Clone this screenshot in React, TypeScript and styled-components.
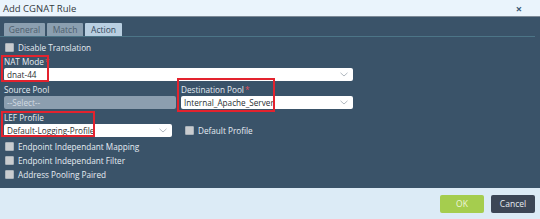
import styled, { createGlobalStyle } from 'styled-components';

const GlobalStyle = createGlobalStyle`
  html, body {
    margin: 0;
    padding: 0;
    background: #ffffff;
  }
  body {
    font-family: "Open Sans", "Noto Sans", sans-serif;
  }
`;

const Dialog = styled.div`
  width: 540px;
  height: 219px;
  display: flex;
  flex-direction: column;
  overflow: hidden;
`;

const TitleBar = styled.div`
  height: 16px;
  flex: none;
  display: flex;
  align-items: center;
  justify-content: space-between;
  padding: 0 18px 0 3px;
  background: #eaf4fc;
  border-bottom: 1px solid #7d8a97;
`;

const Title = styled.span`
  font-size: 9.5px;
  color: #333a40;
`;

const Close = styled.span`
  font-size: 11px;
  font-weight: 700;
  line-height: 1;
  color: #3c5a76;
`;

const Body = styled.div`
  flex: 1;
  background: #3a5369;
  padding-top: 6px;
`;

const TabBar = styled.div`
  display: flex;
  gap: 2px;
  padding-left: 4px;
  margin-right: 5px;
  border-bottom: 1px solid #4c7587;
`;

const Tab = styled.div<{ $active?: boolean; $width: number }>`
  height: 13px;
  display: flex;
  align-items: center;
  justify-content: center;
  width: ${p => p.$width}px;
  font-size: 8.5px;
  background: ${p => (p.$active ? '#b9cfe1' : '#8b9fb0')};
  color: ${p => (p.$active ? '#33485c' : '#4d5e6e')};
  border-radius: 1px 1px 0 0;
`;

const Form = styled.div`
  display: grid;
  grid-template-columns: 172px 172px;
  column-gap: 5px;
  row-gap: 3px;
  padding: 2px 0 0 4px;
  width: 351px;
`;

const FullRow = styled.div`
  grid-column: 1 / span 2;
`;

const Field = styled.div`
  position: relative;
  display: flex;
  flex-direction: column;
`;

const Label = styled.div`
  height: 11px;
  line-height: 12px;
  font-size: 8.2px;
  color: #e6edf3;
  white-space: nowrap;
`;

const Required = styled.span`
  color: #e4505a;
  margin-left: 1px;
`;

const Select = styled.div<{ $disabled?: boolean; $width?: number }>`
  height: 13px;
  width: ${p => (p.$width ? `${p.$width}px` : '100%')};
  box-sizing: border-box;
  display: flex;
  align-items: center;
  justify-content: space-between;
  padding: 0 5px 0 3px;
  border-radius: 2px;
  font-size: 8.2px;
  background: ${p => (p.$disabled ? '#8c9eaf' : '#ffffff')};
  color: ${p => (p.$disabled ? '#d3dbe3' : '#2b2f33')};
  margin-top: 1px;
`;

const CheckRow = styled.label<{ $indent?: number }>`
  display: flex;
  align-items: center;
  gap: 4px;
  height: 14px;
  padding-left: ${p => p.$indent ?? 5}px;
  font-size: 8.2px;
  color: #e6edf3;
  white-space: nowrap;
`;

const TopCheck = styled(CheckRow)`
  margin-top: 3px;
`;

const Box = styled.span`
  width: 7px;
  height: 7px;
  background: #c9cccf;
  border: 1px solid #a9b2ba;
  border-radius: 1px;
  flex: none;
`;

const AlignedCheck = styled.div`
  display: flex;
  align-items: flex-end;
`;

const Checks = styled.div`
  display: flex;
  flex-direction: column;
  margin-top: 2px;
`;

/* red annotation frames drawn over the fields */
const Highlight = styled.div<{ $l: number; $t: number; $w: number; $h: number }>`
  position: absolute;
  left: ${p => p.$l}px;
  top: ${p => p.$t}px;
  width: ${p => p.$w}px;
  height: ${p => p.$h}px;
  box-sizing: border-box;
  border: 2px solid #e3232e;
  pointer-events: none;
`;

const Footer = styled.div`
  height: 31px;
  flex: none;
  background: #dcebf6;
  display: flex;
  align-items: center;
  justify-content: flex-end;
  gap: 7px;
  padding-right: 5px;
`;

const Button = styled.button<{ $primary?: boolean }>`
  width: 44px;
  height: 18px;
  border: none;
  border-radius: 2px;
  font-family: inherit;
  font-size: 8.5px;
  padding: 0;
  background: ${p => (p.$primary ? '#a5cd4e' : '#3c4656')};
  color: ${p => (p.$primary ? '#eef6dc' : '#e8ecf0')};
`;

const Chevron = () => (
  <svg width="8" height="5" viewBox="0 0 8 5">
    <path d="M0.5 0.8 L4 4 L7.5 0.8" fill="none" stroke="#a7b0b8" strokeWidth="0.9" />
  </svg>
);

export default function App() {
  return (
    <>
      <GlobalStyle />
      <Dialog>
        <TitleBar>
          <Title>Add CGNAT Rule</Title>
          <Close>×</Close>
        </TitleBar>
        <Body>
          <TabBar>
            <Tab $width={41}>General</Tab>
            <Tab $width={36}>Match</Tab>
            <Tab $width={37} $active>Action</Tab>
          </TabBar>
          <TopCheck>
            <Box />
            Disable Translation
          </TopCheck>
          <Form>
            <FullRow>
              <Field>
                <Label>
                  NAT Mode<Required>*</Required>
                </Label>
                <Select>
                  dnat-44
                  <Chevron />
                </Select>
                <Highlight $l={-3} $t={-1} $w={48} $h={27} />
              </Field>
            </FullRow>
            <Field>
              <Label>Source Pool</Label>
              <Select $disabled>--Select--</Select>
            </Field>
            <Field>
              <Label>
                Destination Pool<Required>*</Required>
              </Label>
              <Select>
                Internal_Apache_Server
                <Chevron />
              </Select>
              <Highlight $l={-4} $t={-6} $w={98} $h={34} />
            </Field>
            <Field>
              <Label>LEF Profile</Label>
              <Select $width={168}>
                Default-Logging-Profile
                <Chevron />
              </Select>
              <Highlight $l={-3} $t={-1} $w={94} $h={26} />
            </Field>
            <AlignedCheck>
              <CheckRow $indent={4}>
                <Box />
                Default Profile
              </CheckRow>
            </AlignedCheck>
          </Form>
          <Checks>
            <CheckRow>
              <Box />
              Endpoint Independant Mapping
            </CheckRow>
            <CheckRow>
              <Box />
              Endpoint Independant Filter
            </CheckRow>
            <CheckRow>
              <Box />
              Address Pooling Paired
            </CheckRow>
          </Checks>
        </Body>
        <Footer>
          <Button $primary>OK</Button>
          <Button>Cancel</Button>
        </Footer>
      </Dialog>
    </>
  );
}
